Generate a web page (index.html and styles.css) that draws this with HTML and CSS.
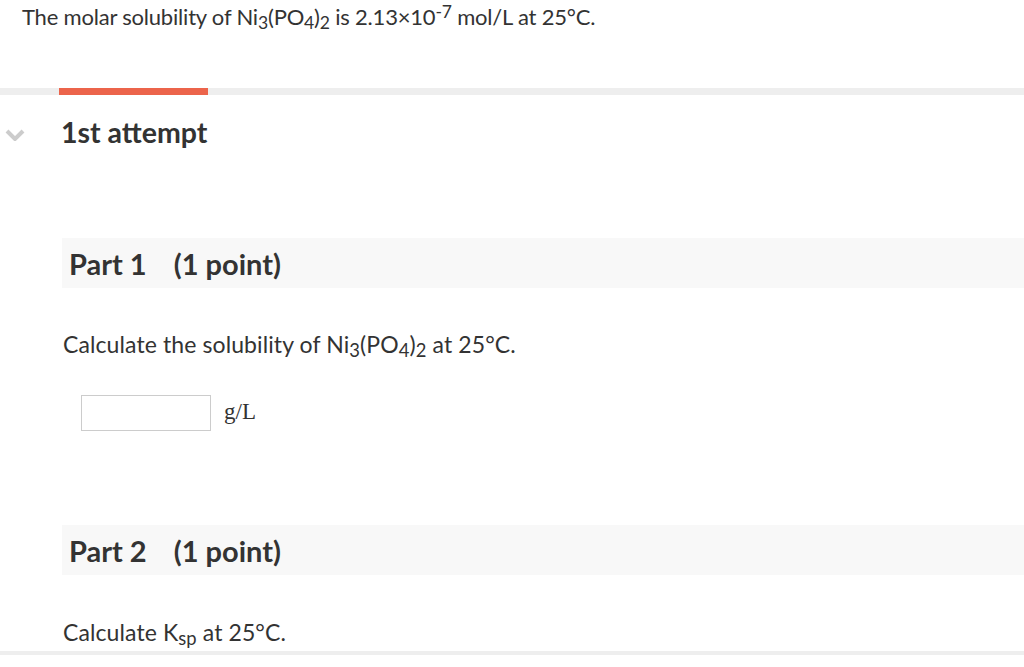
FILE: index.html
```html
<!DOCTYPE html>
<html>
<head>
<meta charset="utf-8">
<link rel="stylesheet" href="styles.css">
</head>
<body>
<div class="intro">The molar solubility of Ni<sub>3</sub>(PO<sub>4</sub>)<sub>2</sub> is 2.13×10<sup>-7</sup> mol/L at 25°C.</div>
<div class="tabs"><div class="tab-active"></div></div>
<div class="attempt">
  <svg class="chev" width="20" height="12" viewBox="0 0 20 12"><path d="M2 2 L10 10 L18 2" fill="none" stroke="#cccccc" stroke-width="4"/></svg>
  <h2 class="attempt-title">1st attempt</h2>
</div>
<div class="content">
  <div class="part-head"><span>Part 1</span><span class="pts">(1 point)</span></div>
  <p class="q">Calculate the solubility of Ni<sub>3</sub>(PO<sub>4</sub>)<sub>2</sub> at 25°C.</p>
  <div class="answer"><input class="box" type="text"><span class="unit">g/L</span></div>
  <div class="part-head part2"><span>Part 2</span><span class="pts">(1 point)</span></div>
  <p class="q q2">Calculate K<sub>sp</sub> at 25°C.</p>
</div>
<div class="bottom-bar"></div>
</body>
</html>
```
FILE: styles.css
```css
html, body { margin: 0; padding: 0; background: #fff; }
body { font-family: Lato, "Open Sans", sans-serif; color: #333; width: 1024px; height: 667px; overflow: hidden; position: relative; }
sub, sup { font-size: 80%; line-height: 0; position: relative; vertical-align: baseline; }
sub { bottom: -0.2em; }
sup { top: -0.42em; }
.intro { font-size: 22px; padding: 3px 0 0 22px; height: 85px; line-height: 28px; letter-spacing: -0.2px; }
.tabs { height: 7px; background: #eeeeee; display: flex; padding-left: 59px; }
.tab-active { width: 149px; background: #ec644b; }
.attempt { display: flex; align-items: center; height: 74px; }
.chev { margin-left: 5px; margin-top: 6px; }
.attempt-title { margin: 0 0 0 36px; font-size: 28.5px; font-weight: 700; }
.content { padding-left: 62px; padding-top: 69px; }
.part-head { background: #f8f8f8; height: 50px; display: flex; align-items: center; padding-left: 7px; font-size: 29px; font-weight: 700; }
.pts { margin-left: 27px; }
.q { margin: 41px 0 0 1px; font-size: 23px; line-height: 30px; letter-spacing: 0.1px; }
.answer { display: flex; align-items: center; margin: 36px 0 0 19px; height: 36px; }
.box { box-sizing: border-box; width: 130px; height: 36px; border: 1px solid #cccccc; margin: 0; padding: 0; }
.unit { font-family: "Liberation Serif", serif; font-size: 23px; margin-left: 13px; margin-top: -2px; }
.part2 { margin-top: 94px; }
.q2 { margin-top: 42px; }
.bottom-bar { position: absolute; left: 0; top: 651px; width: 1024px; height: 4px; background: #eeeeee; }
```
